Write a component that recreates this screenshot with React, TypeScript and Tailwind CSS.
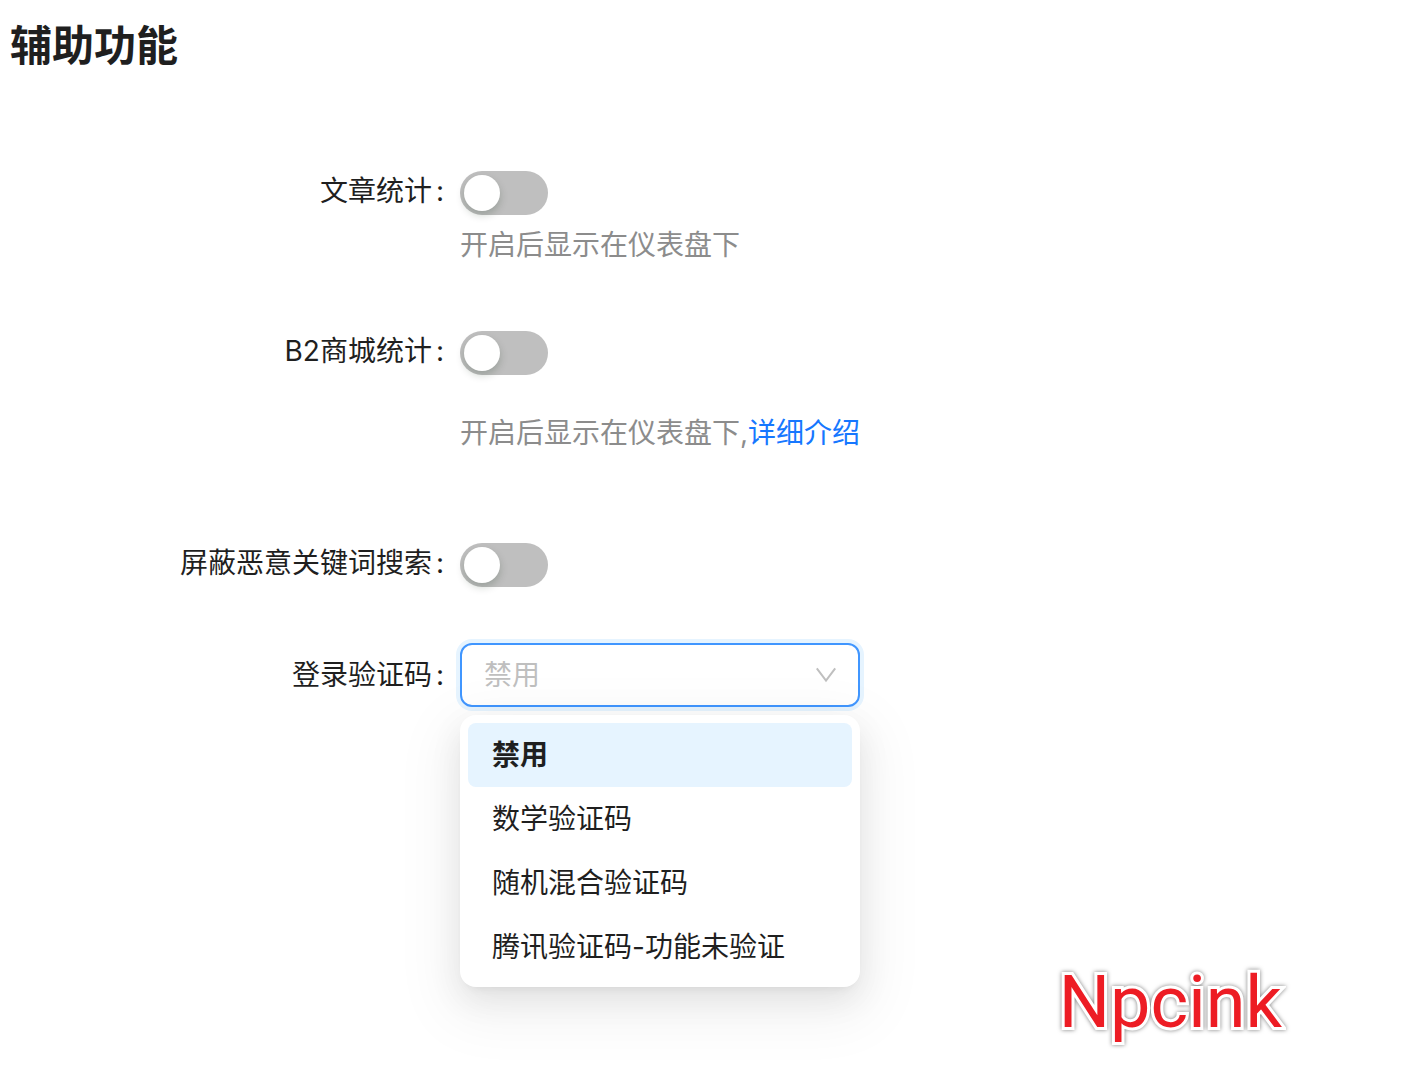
import { useState } from "react";
import type { ReactNode } from "react";

const OPTIONS = [
  { value: "off", label: "禁用" },
  { value: "math", label: "数学验证码" },
  { value: "mixed", label: "随机混合验证码" },
  { value: "tencent", label: "腾讯验证码-功能未验证" },
];

function FormItem({
  id,
  label,
  children,
}: {
  id: string;
  label: string;
  children: ReactNode;
}) {
  return (
    <div className="grid grid-cols-3">
      <label
        htmlFor={id}
        className="flex h-16 items-center justify-end whitespace-nowrap"
      >
        {label}
        <span className="ml-1 mr-4">:</span>
      </label>
      <div className="col-span-2">{children}</div>
    </div>
  );
}

function Switch({ id }: { id: string }) {
  const [checked, setChecked] = useState(false);

  return (
    <div className="h-16 pt-3">
      <input
        id={id}
        type="checkbox"
        role="switch"
        checked={checked}
        onChange={(e) => setChecked(e.target.checked)}
        className="block h-11 w-[88px] cursor-pointer appearance-none rounded-full bg-[#bfbfbf] p-1 before:block before:size-9 before:rounded-full before:bg-white before:shadow-[0_4px_8px_rgba(0,35,11,0.2)] checked:bg-[#1677ff] checked:before:ml-11"
      />
    </div>
  );
}

function CaptchaSelect({ id }: { id: string }) {
  const [open, setOpen] = useState(true);
  const [selected, setSelected] = useState("off");

  return (
    <div className="relative w-[400px]">
      <select
        id={id}
        value={selected}
        onChange={(e) => setSelected(e.target.value)}
        onMouseDown={(e) => {
          e.preventDefault();
          setOpen(!open);
        }}
        className="block h-16 w-full appearance-none rounded-xl border-2 border-[#4096ff] bg-white px-[22px] text-[#bfbfbf] shadow-[0_0_0_4px_#e6f4ff] outline-none"
      >
        {OPTIONS.map((option) => (
          <option key={option.value} value={option.value}>
            {option.label}
          </option>
        ))}
      </select>
      <svg
        viewBox="0 0 24 24"
        className="pointer-events-none absolute right-[22px] top-5 size-6"
        fill="none"
        stroke="#bfbfbf"
        strokeWidth="2"
      >
        <path d="M2.8 5.4 12 17.6 21.2 5.4" />
      </svg>
      {open && (
        <ul
          role="listbox"
          className="absolute left-0 top-full mt-2 w-full rounded-2xl bg-white p-2 shadow-[0_12px_32px_0_rgba(0,0,0,0.08),0_6px_12px_-8px_rgba(0,0,0,0.12),0_18px_56px_16px_rgba(0,0,0,0.05)]"
        >
          {OPTIONS.map((option) => (
            <li
              key={option.value}
              role="option"
              aria-selected={option.value === selected}
              onClick={() => {
                setSelected(option.value);
                setOpen(false);
              }}
              className="flex h-16 cursor-pointer items-center rounded-lg px-6 aria-selected:bg-[#e6f4ff] aria-selected:font-semibold"
            >
              {option.label}
            </li>
          ))}
        </ul>
      )}
    </div>
  );
}

export default function App() {
  return (
    <div className="min-h-screen bg-white font-['Inter','Noto_Sans_CJK_SC',sans-serif] text-[28px] leading-[44px] text-[#1f1f1f]">
      <h1 className="px-[10px] pt-[13px] text-[42px] font-semibold leading-[66px]">
        辅助功能
      </h1>
      <form className="mt-20 flex flex-col gap-12 pl-[10px] pr-[54px]">
        <FormItem id="post-stats" label="文章统计">
          <Switch id="post-stats" />
          <div className="h-12 text-[#8c8c8c]">开启后显示在仪表盘下</div>
        </FormItem>
        <FormItem id="shop-stats" label="B2商城统计">
          <Switch id="shop-stats" />
          <p className="my-7 text-[#8c8c8c]">
            开启后显示在仪表盘下,
            <a href="#" className="text-[#1677ff]">
              详细介绍
            </a>
          </p>
        </FormItem>
        <FormItem id="block-search" label="屏蔽恶意关键词搜索">
          <Switch id="block-search" />
        </FormItem>
        <FormItem id="captcha" label="登录验证码">
          <CaptchaSelect id="captcha" />
        </FormItem>
      </form>
      <footer className="mt-64 flex justify-end pr-[132px]">
        <span className="font-['Roboto',sans-serif] text-[72px] leading-[80px] text-[#ed1c24] [paint-order:stroke_fill] [-webkit-text-stroke:6px_white] [filter:drop-shadow(0_0_2px_rgba(0,0,0,0.5))]">
          Npcink
        </span>
      </footer>
    </div>
  );
}
